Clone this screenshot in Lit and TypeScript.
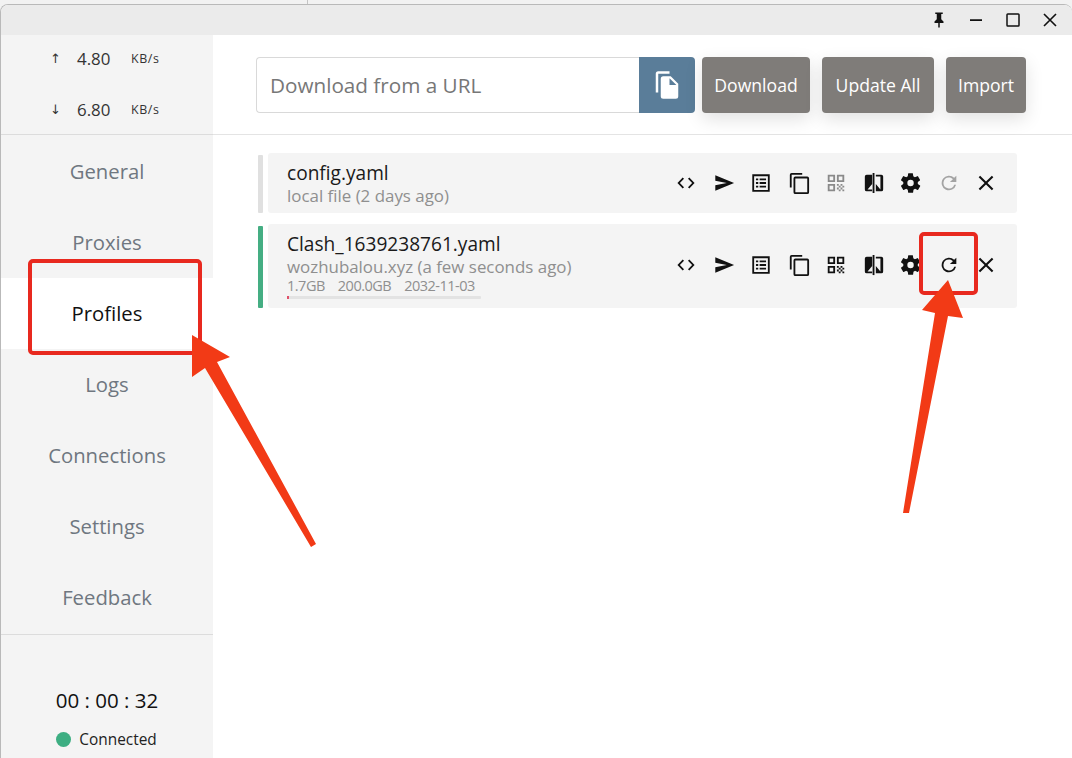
import { LitElement, html, css, svg } from "lit";
import { customElement } from "lit/decorators.js";

const I = (body: unknown, cls = "") => html`<svg class="ic ${cls}" viewBox="0 0 24 24" fill="currentColor">${body}</svg>`;

const icons = {
  code: svg`<path d="M9.6 17.2 4.6 12l5-5.2L8 5.2 1.6 12 8 18.8zM14.4 17.2l5-5.2-5-5.2L16 5.2l6.4 6.8-6.4 6.8z" transform="translate(1.2 1.2) scale(.9)"/>`,
  send: svg`<path d="M2.5 3.5 23 12 2.5 20.5 2.5 14.5 15 12 2.5 9.5z"/>`,
  list: svg`<path fill-rule="evenodd" d="M2.5 2.5h19v19h-19zM4.5 4.5v15h15v-15z"/><path d="M6.5 7h2.5v2h-2.5zM10.5 7h7v2h-7zM6.5 11h2.5v2h-2.5zM10.5 11h7v2h-7zM6.5 15h2.5v2h-2.5zM10.5 15h7v2h-7z"/>`,
  copy: svg`<path d="M15.5 1H4a2 2 0 0 0-2 2v14h2V3h11.5z"/><path fill-rule="evenodd" d="M8 5h13a2 2 0 0 1 2 2v15a2 2 0 0 1-2 2H8a2 2 0 0 1-2-2V7a2 2 0 0 1 2-2zm0 2v15h13V7z"/>`,
  qr: svg`<path fill-rule="evenodd" d="M3 3h8v8H3zM5 5v4h4V5zM13 3h8v8h-8zM15 5v4h4V5zM3 13h8v8H3zM5 15v4h4v-4z"/><path d="M13 13h2v2h-2zM17 13h2v2h-2zM15 15h2v2h-2zM19 15h2v2h-2zM13 17h2v2h-2zM17 17h2v2h-2zM15 19h2v2h-2zM19 19h2v2h-2z"/>`,
  compare: svg`<path d="M10.5 1h2v22h-2z"/><path d="M10 3H4a2 2 0 0 0-2 2v14a2 2 0 0 0 2 2h6v-2H5l5-6z"/><path fill-rule="evenodd" d="M14 3h6a2 2 0 0 1 2 2v14a2 2 0 0 1-2 2h-6v-8l5 6V5h-5z"/>`,
  gear: svg`<path d="M19.4 13a7.5 7.5 0 0 0 0-2l2.3-1.8a.6.6 0 0 0 .1-.7l-2.2-3.8a.6.6 0 0 0-.7-.2l-2.7 1.1a8 8 0 0 0-1.7-1l-.4-2.9a.5.5 0 0 0-.5-.4H9.4a.5.5 0 0 0-.5.4l-.4 2.9a8 8 0 0 0-1.7 1L4.1 4.5a.6.6 0 0 0-.7.2L1.2 8.5a.5.5 0 0 0 .1.7L3.6 11a7.5 7.5 0 0 0 0 2l-2.3 1.8a.6.6 0 0 0-.1.7l2.2 3.8c.1.2.4.3.7.2l2.7-1.1a8 8 0 0 0 1.7 1l.4 2.9c0 .2.3.4.5.4h4.4c.2 0 .5-.2.5-.4l.4-2.9a8 8 0 0 0 1.7-1l2.7 1.1c.3.1.6 0 .7-.2l2.2-3.8a.6.6 0 0 0-.1-.7zM11.5 15.5a3.5 3.5 0 1 1 0-7 3.5 3.5 0 0 1 0 7z"/>`,
  refresh: svg`<path d="M17.65 6.35A8 8 0 1 0 19.73 14h-2.08A6 6 0 1 1 12 6c1.66 0 3.14.69 4.22 1.78L13 11h7V4z"/>`,
  close: svg`<path d="M20 5.6 18.4 4 12 10.4 5.6 4 4 5.6 10.4 12 4 18.4 5.6 20 12 13.6 18.4 20 20 18.4 13.6 12z"/>`,
};

@customElement("profile-card")
class ProfileCard extends LitElement {
  static properties = { name: {}, sub: {}, active: { type: Boolean }, meta: { type: Boolean } };
  declare name: string;
  declare sub: string;
  declare active: boolean;
  declare meta: boolean;
  static styles = css`
    :host { display: flex; gap: 5px; }
    .mark { width: 5px; background: #e0e0e0; border-radius: 1px; margin: 2px 0 0; flex: none; }
    .mark.on { background: #45ae83; }
    .card { flex: 1; background: #f4f4f4; border-radius: 3px; display: flex; align-items: center; justify-content: space-between; padding: 0 20px 0 19px; box-sizing: border-box; }
    .info { padding-top: 3px; }
    .info.full { padding: 0; }
    .name { font-size: 19.1px; line-height: 23px; color: #1a1a1a; }
    .sub { font-size: 16.9px; line-height: 22px; color: #8f8f8f; }
    .meta { font-size: 14.5px; line-height: 16px; color: #8f8f8f; display: flex; gap: 13px; letter-spacing: -.5px; }
    .bar { width: 194px; height: 3px; background: #e3e3e3; border-radius: 1px; margin-top: 2px; }
    .bar i { display: block; width: 2px; height: 3px; background: #e0516a; }
    .tools { display: flex; gap: 15.5px; color: #111; align-items: center; }
    .tools.up { margin-top: -2px; }
    .ic { width: 22px; height: 22px; display: block; }
    .dim { color: #8a8a8a; }
    .dimmer { color: #a3a3a3; }
  `;
  render() {
    return html`
      <div class="mark ${this.active ? "on" : ""}"></div>
      <div class="card">
        <div class="info ${this.meta ? "full" : ""}">
          <div class="name">${this.name}</div>
          <div class="sub">${this.sub}</div>
          ${this.meta
            ? html`<div class="meta"><span>1.7GB</span><span>200.0GB</span><span>2032-11-03</span></div>
                <div class="bar"><i></i></div>`
            : ""}
        </div>
        <div class="tools ${this.active ? "up" : ""}">
          ${I(icons.code)}${I(icons.send)}${I(icons.list)}${I(icons.copy)}
          ${I(icons.qr, this.active ? "" : "dim")}${I(icons.compare)}${I(icons.gear)}
          ${I(icons.refresh, this.active ? "" : "dimmer")}${I(icons.close)}
        </div>
      </div>
    `;
  }
}

@customElement("app-root")
class AppRoot extends LitElement {
  static styles = css`
    :host { display: block; position: relative; width: 1072px; height: 758px; overflow: hidden; background: #f2f2f2; font-family: "Open Sans", "Noto Sans", sans-serif; }
    .window { position: relative; margin: 4px 0 0 0; height: 754px; border: 1px solid #b9b9b9; border-bottom: 0; border-right: 0; border-radius: 8px 8px 0 0; background: #fff; overflow: hidden; display: flex; flex-direction: column; box-sizing: border-box; }
    .titlebar { height: 30px; flex: none; background: #ebebeb; display: flex; justify-content: flex-end; align-items: center; gap: 19px; padding: 0 13px 0 0; color: #111; }
    .titlebar svg { width: 18px; height: 18px; display: block; }
    .body { flex: 1; display: flex; min-height: 0; }
    .side { width: 212px; flex: none; background: #f4f4f4; display: flex; flex-direction: column; }
    .traffic { height: 100px; box-sizing: border-box; display: flex; flex-direction: column; justify-content: space-between; align-items: center; border-bottom: 1px solid #dcdcdc; flex: none; color: #333; padding: 12px 0 13px; }
    .tr { display: grid; grid-template-columns: 25px 54px 31px; align-items: center; }
    .arrow { font-family: "DejaVu Sans", sans-serif; font-size: 13px; color: #333; margin-left: -2px; }
    .val { font-size: 16.9px; }
    .unit { font-size: 12.4px; letter-spacing: .6px; }
    nav { flex: none; height: 500px; padding-top: 1px; box-sizing: border-box; border-bottom: 1px solid #dcdcdc; }
    nav div { height: 71.15px; box-sizing: border-box; padding-bottom: 2px; display: flex; align-items: center; justify-content: center; font-size: 20.3px; color: #6f7780; }
    nav div.on { background: #fff; color: #111; }
    .foot { flex: 1; display: flex; flex-direction: column; align-items: center; padding-top: 53px; }
    .clock { font-size: 20.5px; color: #111; line-height: 24px; }
    .status { display: flex; align-items: center; gap: 8px; font-size: 15.4px; color: #222; margin-top: 17px; padding-right: 1px; }
    .dot { width: 15px; height: 15px; border-radius: 50%; background: #3dae82; }
    main { flex: 1; display: flex; flex-direction: column; min-width: 0; }
    .top { height: 100px; flex: none; box-sizing: border-box; border-bottom: 1px solid #e4e4e4; display: flex; align-items: flex-start; padding: 22px 0 0 43px; }
    .field { width: 383px; height: 56px; box-sizing: border-box; border: 1px solid #d9d9d9; border-right: 0; border-radius: 4px 0 0 4px; font-size: 20.7px; color: #777; display: flex; align-items: center; padding-left: 13px; }
    .paste { width: 56px; height: 56px; background: #5a7d99; border-radius: 0 4px 4px 0; display: flex; align-items: center; justify-content: center; color: #fff; margin-right: 7px; }
    .paste svg { width: 30px; height: 30px; display: block; }
    .btn { height: 56px; background: #7f7c79; color: #fff; border-radius: 4px; font-size: 17.6px; display: flex; align-items: center; justify-content: center; box-shadow: 0 6px 18px rgba(0,0,0,.12); box-sizing: border-box; }
    .b1 { width: 108px; margin-right: 12px; }
    .b2 { width: 112px; margin-right: 12px; }
    .b3 { width: 80px; }
    .list { padding: 18px 55px 0 45px; display: flex; flex-direction: column; gap: 11px; }
    .c1 { height: 60px; }
    .c2 { height: 84px; }
    .overlay { position: absolute; left: 0; top: 0; width: 1072px; height: 758px; pointer-events: none; }
  `;
  render() {
    return html`
      <div class="window">
        <div class="titlebar">
          <svg viewBox="0 0 24 24" fill="currentColor"><path d="M7 2h10v2h-2v7l3 3v2h-5v6h-2v-6H6v-2l3-3V4H7z"/></svg>
          <svg viewBox="0 0 24 24" fill="currentColor"><path d="M4 11h16v2.4H4z"/></svg>
          <svg viewBox="0 0 24 24" fill="none" stroke="currentColor" stroke-width="2"><rect x="4" y="4" width="16" height="16" rx="1"/></svg>
          <svg viewBox="0 0 24 24" fill="none" stroke="currentColor" stroke-width="2.2"><path d="M4 4l16 16M20 4 4 20"/></svg>
        </div>
        <div class="body">
          <aside class="side">
            <div class="traffic">
              <div class="tr"><span class="arrow">↑</span><span class="val">4.80</span><span class="unit">KB/s</span></div>
              <div class="tr"><span class="arrow">↓</span><span class="val">6.80</span><span class="unit">KB/s</span></div>
            </div>
            <nav>
              <div>General</div><div>Proxies</div><div class="on">Profiles</div><div>Logs</div><div>Connections</div><div>Settings</div><div>Feedback</div>
            </nav>
            <div class="foot">
              <div class="clock">00 : 00 : 32</div>
              <div class="status"><span class="dot"></span>Connected</div>
            </div>
          </aside>
          <main>
            <div class="top">
              <div class="field">Download from a URL</div>
              <div class="paste"><svg viewBox="0 0 24 24" fill="currentColor"><path d="M14 1H5a2 2 0 0 0-2 2v15h2V3h9z"/><path d="M9 5a2 2 0 0 0-2 2v14a2 2 0 0 0 2 2h10a2 2 0 0 0 2-2V11l-6-6zm5 1.5L19.5 12H14z"/></svg></div>
              <div class="btn b1">Download</div>
              <div class="btn b2">Update All</div>
              <div class="btn b3">Import</div>
            </div>
            <div class="list">
              <profile-card class="c1" name="config.yaml" sub="local file (2 days ago)"></profile-card>
              <profile-card class="c2" active meta name="Clash_1639238761.yaml" sub="wozhubalou.xyz (a few seconds ago)"></profile-card>
            </div>
          </main>
        </div>
      </div>
      <svg class="overlay" viewBox="0 0 1072 758">
        <path d="M307.5 0v4" stroke="#c4c4c4" stroke-width="1"/>
        <rect x="30" y="261" width="170" height="92" rx="3" fill="none" stroke="#e8291f" stroke-width="4"/>
        <rect x="921" y="234" width="55" height="59" rx="3" fill="none" stroke="#e8291f" stroke-width="4"/>
        <path d="M192 335 230 357 217 362 316 544 311 547 205 368 192 377z" fill="#f23a16"/>
        <path d="M948 280 963 318 948 316 909 513 903 513 935 313 922 310z" fill="#f23a16"/>
      </svg>
    `;
  }
}
